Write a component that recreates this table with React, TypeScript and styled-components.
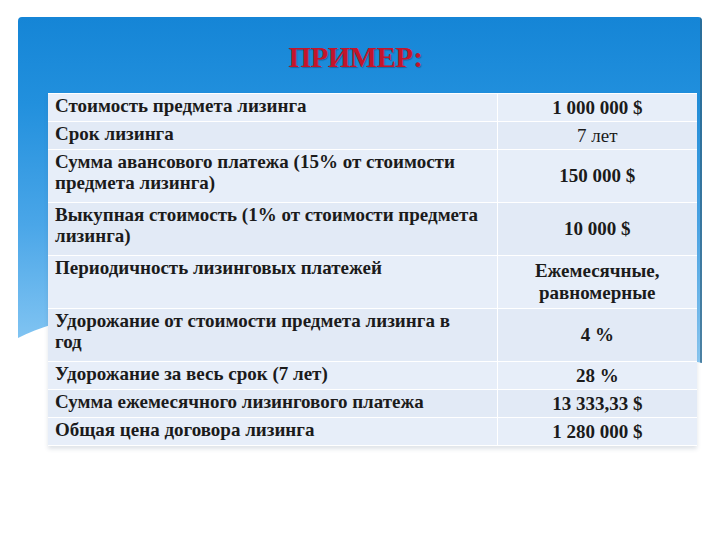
import React from 'react';
import styled, { createGlobalStyle } from 'styled-components';

const GlobalStyle = createGlobalStyle`
  html, body {
    margin: 0;
    padding: 0;
    background: #ffffff;
  }
`;

interface Item {
  label: string;
  value: React.ReactNode;
  tall?: boolean;
  light?: boolean;
}

const rows: Item[] = [
  { label: 'Стоимость предмета лизинга', value: '1 000 000 $' },
  { label: 'Срок лизинга', value: '7 лет', light: true },
  { label: 'Сумма авансового платежа (15% от стоимости предмета лизинга)', value: '150 000 $', tall: true },
  { label: 'Выкупная стоимость (1% от стоимости предмета лизинга)', value: '10 000 $', tall: true },
  {
    label: 'Периодичность лизинговых платежей',
    value: (
      <>
        Ежемесячные,
        <br />
        равномерные
      </>
    ),
    tall: true,
  },
  { label: 'Удорожание от стоимости предмета лизинга в год', value: '4 %', tall: true },
  { label: 'Удорожание за весь срок (7 лет)', value: '28 %' },
  { label: 'Сумма ежемесячного лизингового платежа', value: '13 333,33 $' },
  { label: 'Общая цена договора лизинга', value: '1 280 000 $' },
];

const App: React.FC = () => {
  return (
    <Slide>
      <GlobalStyle />
      <Panel>
        <Title>ПРИМЕР:</Title>
        <Table>
          <tbody>
            {rows.map((row, i) => (
              <Row key={i} $tall={row.tall} $even={i % 2 === 1}>
                <LabelCell>{row.label}</LabelCell>
                <ValueCell $light={row.light}>{row.value}</ValueCell>
              </Row>
            ))}
          </tbody>
        </Table>
      </Panel>
    </Slide>
  );
};

const serif = `"Liberation Serif", "DejaVu Serif", serif`;

const Slide = styled.div`
  width: 720px;
  height: 540px;
  box-sizing: border-box;
  padding: 17px 0 0 18px;
  overflow: hidden;
  font-family: ${serif};
`;

const Panel = styled.div`
  position: relative;
  width: 684px;
  box-sizing: border-box;
  padding: 0 5px 0 30px;

  &::before {
    content: "";
    position: absolute;
    left: 0;
    top: 0;
    width: 684px;
    height: 346px;
    background:
      linear-gradient(to left, rgba(50, 100, 130, 0.7) 0 2px, transparent 2px),
      linear-gradient(180deg, #1585d6 0%, #2290dd 25%, #4aa6e8 60%, #8ccaf4 100%);
    clip-path: path('M0 4 Q0 0 4 0 H680 Q684 0 684 4 V346 C560 320 400 285 240 285 C120 285 40 300 0 321 Z');
  }
`;

const Title = styled.h1`
  position: relative;
  margin: 0;
  height: 76px;
  display: flex;
  align-items: center;
  justify-content: center;
  padding: 4px 34px 0 0;
  box-sizing: border-box;
  font-family: ${serif};
  font-weight: 700;
  font-size: 29px;
  letter-spacing: -0.6px;
  color: #c3152b;
  text-shadow: 1px 1px 1px rgba(0, 0, 0, 0.25);
`;

const Table = styled.table`
  position: relative;
  width: 649px;
  border-collapse: collapse;
  table-layout: fixed;
  font-family: ${serif};
  box-shadow: 0 3px 4px rgba(80, 100, 130, 0.18);
`;

const Row = styled.tr<{ $tall?: boolean; $even?: boolean }>`
  height: ${(p) => (p.$tall ? '53px' : '28px')};
  background: ${(p) => (p.$even ? '#e2eaf6' : '#e7eef9')};
`;

const LabelCell = styled.td`
  width: 449px;
  box-sizing: border-box;
  padding: 1px 18px 0 7px;
  border: 1px solid #ffffff;
  border-left: none;
  vertical-align: top;
  font-family: ${serif};
  font-size: 19px;
  line-height: 21px;
  font-weight: 700;
  color: #1b1b1b;
`;

const ValueCell = styled.td<{ $light?: boolean }>`
  box-sizing: border-box;
  padding: 0 4px;
  border: 1px solid #ffffff;
  border-right: none;
  vertical-align: middle;
  text-align: center;
  font-family: ${serif};
  font-size: 19px;
  line-height: 22px;
  font-weight: ${(p) => (p.$light ? 400 : 700)};
  color: #1b1b1b;
`;

export default App;
